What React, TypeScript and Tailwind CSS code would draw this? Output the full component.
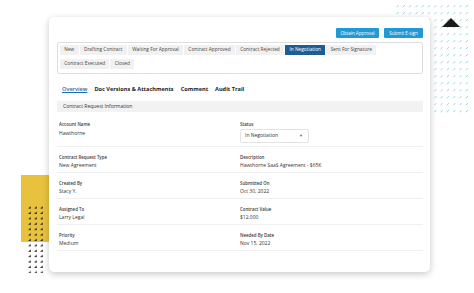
const statusRow1 = [
    'New',
    'Drafting Contract',
    'Waiting For Approval',
    'Contract Approved',
    'Contract Rejected',
    'In Negotiation',
    'Sent For Signature',
];
const statusRow2 = ['Contract Executed', 'Closed'];

const rows = [
    ['Contract Request Type', 'New Agreement', 'Description', 'Hawthorne SaaS Agreement - $65K'],
    ['Created By', 'Stacy Y.', 'Submitted On', 'Oct 30, 2022'],
    ['Assigned To', 'Larry Legal', 'Contract Value', '$12,000'],
    ['Priority', 'Medium', 'Needed By Date', 'Nov 15, 2022'],
];

function Pill({ label }: { label: string }) {
    const active = label === 'In Negotiation';
    return (
        <span
            className={
                active
                    ? 'h-[10px] px-[4.3px] flex items-center bg-[#1d5c94] text-white text-[4.8px] whitespace-nowrap'
                    : 'h-[10px] px-[4.3px] flex items-center bg-[#f1f1f1] text-[#444] text-[4.8px] whitespace-nowrap'
            }
        >
            {label}
        </span>
    );
}

function Label({ children }: { children: React.ReactNode }) {
    return <div className="h-[6px] leading-[6px] text-[4.4px] font-semibold text-[#3a3a3a]">{children}</div>;
}

function Value({ children }: { children: React.ReactNode }) {
    return <div className="mt-[2px] h-[6px] leading-[6px] text-[5px] text-[#333]">{children}</div>;
}

function TealDots() {
    return (
        <svg className="absolute left-[395px] top-[3px]" width="74" height="112">
            <defs>
                <pattern id="teal" width="6.3" height="7" patternUnits="userSpaceOnUse">
                    <path d="M1.5 4.2 L3.6 2.2" stroke="#86d3d6" strokeWidth="0.9" />
                </pattern>
            </defs>
            <rect width="74" height="112" fill="url(#teal)" />
        </svg>
    );
}

function DarkMarks() {
    return (
        <svg className="absolute left-[27px] top-[205px]" width="18" height="68">
            <defs>
                <pattern id="dark" width="6" height="5.4" patternUnits="userSpaceOnUse">
                    <path d="M1 3.6 L3.8 3.6 L3.8 1.2 Z" fill="#2d2d2d" />
                </pattern>
            </defs>
            <rect width="18" height="68" fill="url(#dark)" />
        </svg>
    );
}

export default function App() {
    return (
        <div className="relative w-[474px] h-[293px] overflow-hidden bg-white pl-[49px] pt-[17px] font-['Open_Sans',sans-serif]">
            <TealDots />
            <svg className="absolute left-[442px] top-[18px]" width="18" height="9">
                <polygon points="9,0 18,9 0,9" fill="#1a1a1a" />
            </svg>
            <div className="absolute left-[21px] top-[175px] w-[40px] h-[67px] bg-[#e8c23f]" />
            <DarkMarks />

            <div className="relative z-10 w-[381px] h-[255px] bg-white rounded-[5px] shadow-[0_2px_7px_rgba(0,0,0,0.22)] pl-[8px] pr-[7px] pt-[11px]">
                <div className="flex justify-end gap-[5px]">
                    <button className="h-[10px] w-[43px] rounded-[1px] bg-[#2199d4] text-white text-[4.5px] flex items-center justify-center">
                        Obtain Approval
                    </button>
                    <button className="h-[10px] w-[39px] rounded-[1px] bg-[#2199d4] text-white text-[4.5px] flex items-center justify-center">
                        Submit E-sign
                    </button>
                </div>

                <div className="mt-[4px] h-[32px] border border-[#dedede] rounded-[2px] pl-[2px] pt-[2px] flex flex-col gap-[4px]">
                    <div className="flex gap-[1px]">
                        {statusRow1.map((s) => (
                            <Pill key={s} label={s} />
                        ))}
                    </div>
                    <div className="flex gap-[1px]">
                        {statusRow2.map((s) => (
                            <Pill key={s} label={s} />
                        ))}
                    </div>
                </div>

                <div className="mt-[10px] h-[10px] flex items-center gap-[7px] pl-[5px] text-[5.6px]">
                    <span className="font-semibold text-[#1d6bb0] underline underline-offset-[1px]">Overview</span>
                    <span className="font-bold text-[#222]">Doc Versions &amp; Attachments</span>
                    <span className="font-bold text-[#222]">Comment</span>
                    <span className="font-bold text-[#222]">Audit Trail</span>
                </div>

                <div className="mt-[7px] h-[11px] bg-[#f2f2f2] pl-[6px] flex items-center text-[5px] font-medium text-[#333]">
                    Contract Request Information
                </div>

                <div className="grid grid-cols-2 px-[2px] pt-[9px] pb-[3px] border-b border-[#f0f0f0]">
                    <div>
                        <Label>Account Name</Label>
                        <div className="mt-[3px] h-[6px] leading-[6px] text-[5px] text-[#333]">Hawthorne</div>
                    </div>
                    <div>
                        <Label>Status</Label>
                        <div className="mt-[2px] h-[14px] w-[69px] border border-[#e2e2e2] rounded-[2px] flex items-center justify-between pl-[4px] pr-[5px] text-[5px] text-[#333]">
                            <span>In Negotiation</span>
                            <span className="text-[4px] text-[#666]">▼</span>
                        </div>
                    </div>
                </div>

                {rows.map((r) => (
                    <div key={r[0]} className="grid grid-cols-2 px-[2px] pt-[7px] pb-[4px] border-b border-[#f0f0f0]">
                        <div>
                            <Label>{r[0]}</Label>
                            <Value>{r[1]}</Value>
                        </div>
                        <div>
                            <Label>{r[2]}</Label>
                            <Value>{r[3]}</Value>
                        </div>
                    </div>
                ))}
            </div>
        </div>
    );
}
